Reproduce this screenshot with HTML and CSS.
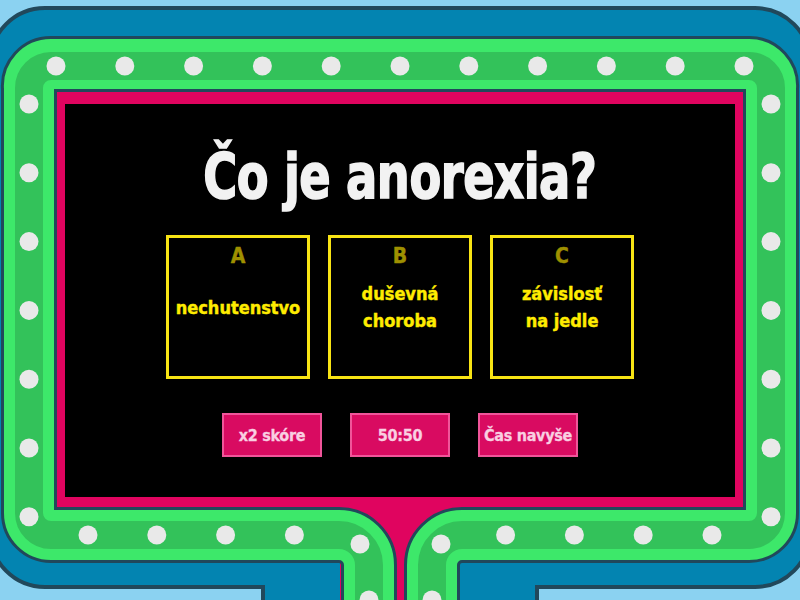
FILE: index.html
```html
<!DOCTYPE html>
<html lang="sk">
<head>
<meta charset="utf-8">
<title>Čo je anorexia?</title>
<link rel="stylesheet" href="styles.css">
</head>
<body>
<div class="stage">
  <svg class="frame" viewBox="0 0 800 600" width="800" height="600" aria-hidden="true">
    <path d="M-10,63 A55,55 0 0 1 45,8 H755 A55,55 0 0 1 810,63 V532 A55,55 0 0 1 755,587 H537 V620 H263 V587 H45 A55,55 0 0 1 -10,532 Z" fill="#0384b1" stroke="#21485b" stroke-width="4"/>
    <rect x="51" y="90" width="698" height="421" rx="9" fill="#e0045f" stroke="#21485b" stroke-width="2"/>
    <rect x="340" y="505" width="120" height="110" fill="#e0045f"/>
    <g fill="none">
      <path d="M369,620 V565 A30,30 0 0 0 339,535 H51 A22,22 0 0 1 29,513 V88 A22,22 0 0 1 51,64 H749 A22,22 0 0 1 771,88 V513 A22,22 0 0 1 749,535 H462 A30,30 0 0 0 432,565 V620" stroke="#21485b" stroke-width="56"/>
      <path d="M369,620 V565 A30,30 0 0 0 339,535 H51 A22,22 0 0 1 29,513 V88 A22,22 0 0 1 51,64 H749 A22,22 0 0 1 771,88 V513 A22,22 0 0 1 749,535 H462 A30,30 0 0 0 432,565 V620" stroke="#3de86a" stroke-width="50"/>
      <path d="M369,620 V565 A30,30 0 0 0 339,535 H51 A22,22 0 0 1 29,513 V88 A22,22 0 0 1 51,66 H749 A22,22 0 0 1 771,88 V513 A22,22 0 0 1 749,535 H462 A30,30 0 0 0 432,565 V620" stroke="#33c25a" stroke-width="28"/>
    </g>
    <g fill="#e9e9e9">
      <circle cx="56" cy="66" r="9.5"/><circle cx="124.8" cy="66" r="9.5"/><circle cx="193.6" cy="66" r="9.5"/><circle cx="262.4" cy="66" r="9.5"/><circle cx="331.2" cy="66" r="9.5"/><circle cx="400" cy="66" r="9.5"/><circle cx="468.8" cy="66" r="9.5"/><circle cx="537.6" cy="66" r="9.5"/><circle cx="606.4" cy="66" r="9.5"/><circle cx="675.2" cy="66" r="9.5"/><circle cx="744" cy="66" r="9.5"/>
      <circle cx="29" cy="104" r="9.5"/><circle cx="29" cy="172.8" r="9.5"/><circle cx="29" cy="241.6" r="9.5"/><circle cx="29" cy="310.4" r="9.5"/><circle cx="29" cy="379.2" r="9.5"/><circle cx="29" cy="448" r="9.5"/><circle cx="29" cy="516.8" r="9.5"/>
      <circle cx="771" cy="104" r="9.5"/><circle cx="771" cy="172.8" r="9.5"/><circle cx="771" cy="241.6" r="9.5"/><circle cx="771" cy="310.4" r="9.5"/><circle cx="771" cy="379.2" r="9.5"/><circle cx="771" cy="448" r="9.5"/><circle cx="771" cy="516.8" r="9.5"/>
      <circle cx="88" cy="535" r="9.5"/><circle cx="156.8" cy="535" r="9.5"/><circle cx="225.6" cy="535" r="9.5"/><circle cx="294.4" cy="535" r="9.5"/><circle cx="360" cy="544" r="9.5"/><circle cx="369" cy="600" r="9.5"/>
      <circle cx="712" cy="535" r="9.5"/><circle cx="643.2" cy="535" r="9.5"/><circle cx="574.4" cy="535" r="9.5"/><circle cx="505.6" cy="535" r="9.5"/><circle cx="441" cy="544" r="9.5"/><circle cx="432" cy="600" r="9.5"/>
    </g>
  </svg>

  <main class="screen">
    <h1 class="title">Čo je anorexia?</h1>
    <div class="answers">
      <div class="answer"><span class="letter">A</span><span class="text">nechutenstvo</span></div>
      <div class="answer"><span class="letter">B</span><span class="text">duševná<br>choroba</span></div>
      <div class="answer"><span class="letter">C</span><span class="text">závislosť<br>na jedle</span></div>
    </div>
    <div class="powerups">
      <div class="btn">x2 skóre</div>
      <div class="btn">50:50</div>
      <div class="btn">Čas navyše</div>
    </div>
  </main>
</div>
</body>
</html>
```

FILE: styles.css
```css
html, body {
  margin: 0;
  padding: 0;
}

body {
  background: #8bd2f1;
}

.stage {
  position: relative;
  width: 800px;
  height: 600px;
  overflow: hidden;
  box-sizing: border-box;
  padding: 104px 0 0 65px;
}

.frame {
  position: absolute;
  left: 0;
  top: 0;
}

.screen {
  position: relative;
  width: 670px;
  height: 393px;
  background: #000;
  display: flex;
  flex-direction: column;
  align-items: center;
  font-family: "DejaVu Sans", sans-serif;
  font-stretch: condensed;
  font-weight: bold;
}

.title {
  margin: 38px 0 0;
  font-size: 62px;
  line-height: 70px;
  font-weight: bold;
  letter-spacing: -0.5px;
  color: #f2f2f2;
  -webkit-text-stroke: 1.6px #f2f2f2;
  white-space: nowrap;
  transform: scaleX(0.83);
}

.answers {
  display: flex;
  gap: 18px;
  margin-top: 23px;
}

.answer {
  width: 144px;
  height: 144px;
  box-sizing: border-box;
  border: 3px solid #f8e414;
  display: grid;
  grid-template-rows: 1fr auto 1fr;
  justify-items: center;
  color: #ffec00;
}

.letter {
  align-self: start;
  padding-top: 8px;
  font-size: 21px;
  line-height: 1;
  color: #9e9000;
  -webkit-text-stroke: 0.4px #9e9000;
}

.text {
  font-size: 18px;
  line-height: 27px;
  text-align: center;
  -webkit-text-stroke: 0.4px #ffec00;
}

.powerups {
  display: flex;
  gap: 28px;
  margin-top: 34px;
}

.btn {
  width: 100px;
  height: 44px;
  box-sizing: border-box;
  background: #d90b61;
  border: 2px solid #f0559a;
  color: #f9cfe1;
  font-size: 16px;
  letter-spacing: -0.3px;
  -webkit-text-stroke: 0.3px #f9cfe1;
  white-space: nowrap;
  display: flex;
  align-items: center;
  justify-content: center;
}
```
